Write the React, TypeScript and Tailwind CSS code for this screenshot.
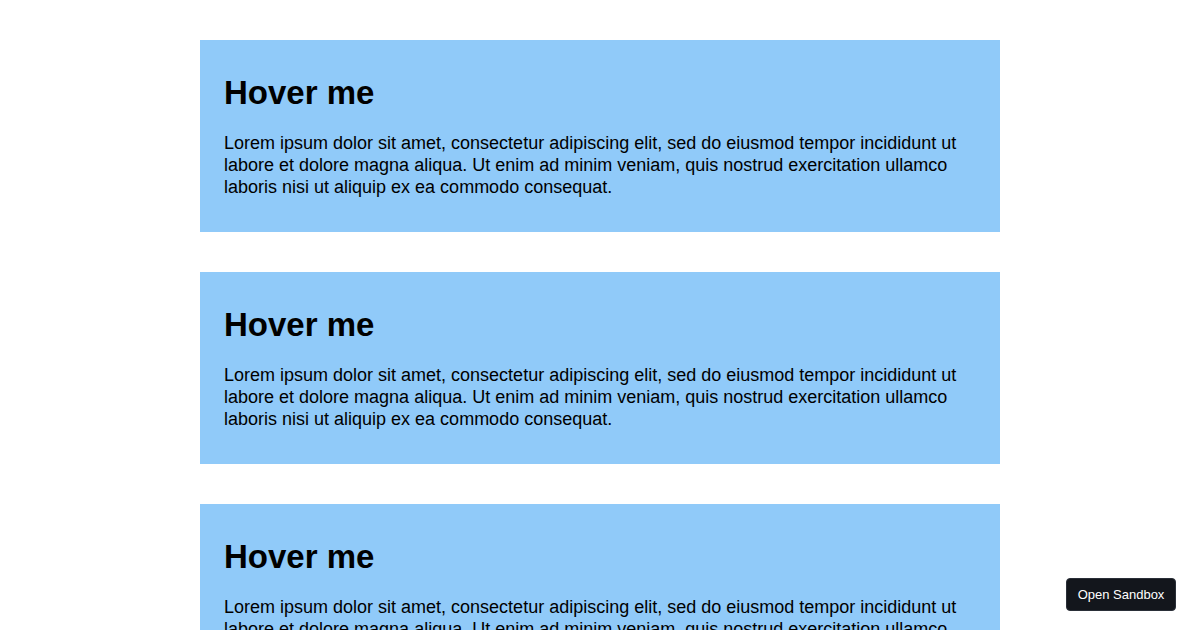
export default function App() {
  const cards = [1, 2, 3];
  return (
    <div className="min-h-screen bg-white font-['Liberation_Sans',Arial,sans-serif] text-black">
      <div className="mx-auto flex w-[800px] flex-col gap-10 py-10">
        {cards.map((n) => (
          <div key={n} className="bg-[#90caf9] px-6 py-4">
            <h1 className="mt-[18px] mb-[21px] text-[33px] font-bold leading-[37px]">Hover me</h1>
            <p className="mb-[18px] text-[18px] leading-[22px]">
              Lorem ipsum dolor sit amet, consectetur adipiscing elit, sed do eiusmod tempor incididunt ut
              labore et dolore magna aliqua. Ut enim ad minim veniam, quis nostrud exercitation ullamco
              laboris nisi ut aliquip ex ea commodo consequat.
            </p>
          </div>
        ))}
      </div>
      <button className="fixed bottom-[19px] right-[24px] h-[33px] w-[110px] rounded-[4px] border border-[#2a2f38] bg-[#13161c] text-[13px] text-white">
        Open Sandbox
      </button>
    </div>
  );
}
